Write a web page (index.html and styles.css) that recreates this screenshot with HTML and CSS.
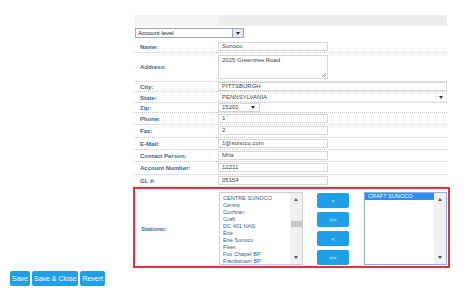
FILE: index.html
```html
<!DOCTYPE html>
<html lang="en">
<head>
    <meta charset="UTF-8">
    <title>Account</title>
    <link rel="stylesheet" href="styles.css">
</head>
<body>
    <div class="form">
        <div class="bar"><div class="bar-l"></div><div class="bar-r"></div></div>
        <div class="level"><span class="level-text">Account level</span><span class="drop"><i class="tri-down"></i></span></div>

        <div class="row"><div class="label">Name:</div><div class="input">Sunoco</div></div>
        <div class="row addr"><div class="label">Address:</div><div class="input area">2025 Greentree Road<i class="grip"></i></div></div>
        <div class="row slim"><div class="label">City:</div><div class="input wide">PITTSBURGH</div></div>
        <div class="row slim state"><div class="label">State:</div><div class="input wide plain">PENNSYLVANIA<i class="tri-down right"></i></div></div>
        <div class="row slim"><div class="label">Zip:</div><div class="input zip">15201<i class="tri-down"></i></div></div>
        <div class="row"><div class="label">Phone:</div><div class="input">1</div></div>
        <div class="row tall"><div class="label">Fax:</div><div class="input">2</div></div>
        <div class="row"><div class="label">E-Mail:</div><div class="input">1@sunoco.com</div></div>
        <div class="row"><div class="label">Contact Person:</div><div class="input">Mria</div></div>
        <div class="row tall"><div class="label">Account Number:</div><div class="input">12211</div></div>
        <div class="row last"><div class="label">GL #:</div><div class="input">05154</div></div>

        <div class="stations">
            <div class="label st-label">Stations:</div>
            <div class="list">
                <div class="items">
                    <div>CENTRE SUNOCO</div>
                    <div>Centre</div>
                    <div>Cochran</div>
                    <div>Craft</div>
                    <div>DC 401 NAS</div>
                    <div>Erie</div>
                    <div>Erie Sunoco</div>
                    <div>Fleet</div>
                    <div>Fox Chapel BP</div>
                    <div>Frankstown BP</div>
                </div>
                <div class="sb"><i class="tri-up"></i><span class="thumb"></span><i class="tri-down"></i></div>
            </div>
            <div class="moves">
                <button class="mv">&gt;</button>
                <button class="mv">&gt;&gt;</button>
                <button class="mv">&lt;</button>
                <button class="mv">&lt;&lt;</button>
            </div>
            <div class="list chosen">
                <div class="items">
                    <div class="sel">CRAFT SUNOCO</div>
                </div>
                <div class="sb"><i class="tri-up"></i><span class="spacer"></span><i class="tri-down"></i></div>
            </div>
        </div>
    </div>

    <div class="actions">
        <button class="btn">Save</button>
        <button class="btn">Save &amp; Close</button>
        <button class="btn">Revert</button>
    </div>
</body>
</html>
```

FILE: styles.css
```css
body { margin: 0; background: #fff; font-family: "Liberation Sans", Arial, sans-serif; color: #444; }
.form { margin-left: 134px; padding-top: 15px; width: 313px; }

.bar { display: grid; grid-template-columns: 84px 1fr; height: 11px; }
.bar-l { background: #f5f5f5; }
.bar-r { background: #ededed; }

.level { display: flex; width: 109px; height: 10px; margin: 2px 0 3px 1px; border: 1px solid #9aa6b4; box-sizing: border-box; font-size: 6px; line-height: 8px; color: #222; }
.level-text { flex: 1; padding-left: 2px; }
.drop { width: 10px; background: #dfe8f3; border-left: 1px solid #9aa6b4; display: flex; align-items: center; justify-content: center; }

.row { display: grid; grid-template-columns: 84px 1fr; align-items: center; padding: 1px 0; border-bottom: 1px dotted #c4c4c4; }
.row.addr { padding: 2px 0; }
.row.slim { padding: 0; }
.row.state { padding-top: 1px; }
.row.tall { padding-bottom: 2px; }
.label { padding-left: 6px; font-size: 6px; font-weight: bold; color: #2f6b98; }

.input { position: relative; width: 110px; height: 9px; box-sizing: border-box; border: 1px solid #d6d6d6; padding-left: 3px; font-size: 6px; line-height: 7px; color: #444; background: #fff; }
.input.area { height: 24px; line-height: 9px; }
.input.wide { width: auto; }
.input.plain { border-color: #f0f0f0; }
.input.zip { width: 42px; display: flex; align-items: center; justify-content: space-between; padding-right: 4px; }
.grip { position: absolute; right: 1px; bottom: 1px; width: 4px; height: 4px; background: linear-gradient(135deg, transparent 45%, #999 45%, #999 55%, transparent 55%, transparent 75%, #999 75%, #999 85%, transparent 85%); }
.right { position: absolute; right: 3px; top: 2px; }

.tri-down { display: inline-block; width: 0; height: 0; border-left: 2px solid transparent; border-right: 2px solid transparent; border-top: 3px solid #333; }
.tri-up { display: inline-block; width: 0; height: 0; border-left: 2px solid transparent; border-right: 2px solid transparent; border-bottom: 3px solid #333; }

.stations { display: grid; grid-template-columns: 84px 84px 46px 98px; margin-left: -1px; width: 317px; height: 81px; box-sizing: border-box; border: 2px solid #e0343c; padding: 3px 1px 1px 0; align-items: start; }
.st-label { align-self: center; }
.list { display: flex; height: 73px; box-sizing: border-box; border: 1px solid #cfcfcf; background: #fff; }
.items { flex: 1; padding: 2px 0 0 3px; font-size: 5.6px; line-height: 7px; color: #2f5f8a; overflow: hidden; white-space: nowrap; }
.sb { width: 12px; background: #f0f0f0; display: flex; flex-direction: column; align-items: center; padding: 5px 0; box-sizing: border-box; }
.sb .tri-up, .sb .tri-down { border-bottom-color: #555; border-top-color: #555; }
.thumb { width: 11px; height: 6px; background: #c6c6c6; margin: 20px 0 auto; }
.spacer { flex: 1; }
.sb .tri-down { margin-top: auto; }

.moves { display: flex; flex-direction: column; gap: 4px; margin-left: 14px; padding-top: 1px; width: 32px; }
.mv { width: 32px; height: 15px; border: 0; border-radius: 2px; background: #1e9fe8; color: #fff; font-family: inherit; font-size: 6px; padding: 0; }

.chosen { margin-left: 15px; width: 83px; border-color: #8eb0e0; }
.chosen .items { padding: 0; }
.sel { background: #2f8cf0; color: #fff; padding-left: 3px; line-height: 7px; }

.actions { display: flex; gap: 2px; margin: 3px 0 0 10px; }
.btn { height: 15px; border: 0; border-radius: 2px; background: #1e9fe8; color: #fff; font-family: inherit; font-size: 7px; padding: 0 2px; }
```
